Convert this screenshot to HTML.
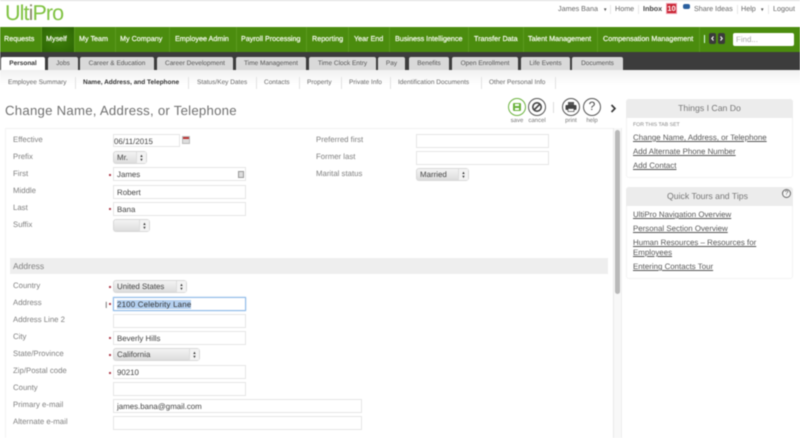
<!DOCTYPE html>
<html><head><meta charset="utf-8"><title>UltiPro</title>
<style>
html,body{margin:0;padding:0;background:#fff}
body{width:800px;height:438px;position:relative;overflow:hidden;font-family:"Liberation Sans",sans-serif;color:#666;text-rendering:geometricPrecision}
#w{position:absolute;left:0;top:0;width:800px;height:438px;filter:blur(.4px);overflow:hidden}
#w div,#w span.a,#w a{position:absolute;white-space:nowrap}
.n{top:34px;font-size:7.2px;line-height:10px;color:#f6faf0;-webkit-text-stroke:.22px #f6faf0}
.s{top:27px;width:1px;height:25px;background:#5c9a20}
.t{top:57px;height:13px;background:#d9d9d9;border-radius:2px 2px 0 0;font-size:6.5px;line-height:14px;text-align:center;color:#555}
.u{top:78px;font-size:6.5px;line-height:10px;color:#666}
.v{top:77px;width:1px;height:12px;background:#e2e2e2}
.l{left:13px;font-size:7.8px;line-height:10px;color:#808080}
.i{background:#fff;border:1px solid #e6e6e6;box-sizing:border-box;height:14px;font-size:7.9px;line-height:13px;padding-left:3px;color:#444}
.sel{background:linear-gradient(#f4f4f4,#dcdcdc);border:1px solid #d8d8d8;border-radius:3px;box-sizing:border-box;height:13px;font-size:7.9px;line-height:12px;padding-left:3px;color:#444}
.sel b{position:absolute;right:0;top:0;bottom:0;width:10px;background:#f3f3f3;border-left:1px solid #ddd;color:#333;font-size:4px;line-height:4.2px;text-align:center;font-weight:normal;padding-top:1.5px;box-sizing:border-box}
.r{left:109px;width:2px;height:2px;background:#b04050}
.lk{left:633px;font-size:7.9px;line-height:10px;color:#555;text-decoration:underline}
.ic{top:98px;width:18px;height:18px;border:1.3px solid #555;border-radius:50%;box-sizing:border-box;background:#fff}
.ict{top:117px;font-size:6px;line-height:8px;color:#777;text-align:center;width:24px}
.top{top:4px;font-size:7.2px;line-height:10px;color:#666}
.sp{top:5px;width:1px;height:9px;background:#e8e8e8}
</style></head><body><div id="w">

<div style="left:0;top:0;width:800px;height:1px;background:#ddd"></div>
<div style="left:5px;top:0;font-size:21.5px;line-height:27px;color:#7fc241;letter-spacing:-.9px">Ult<span style="color:#8b8b6a">i</span>Pro</div>

<div class="top" style="left:558px">James Bana</div>
<div style="left:603px;top:5px;font-size:4.5px;line-height:9px;color:#555">▼</div>
<div class="sp" style="left:610px"></div>
<div class="top" style="left:615px">Home</div>
<div class="sp" style="left:638px"></div>
<div class="top" style="left:643px;color:#444;font-weight:bold">Inbox</div>
<div style="left:666px;top:3px;width:11px;height:11px;background:#c8202f;border:1px solid #e9a;box-sizing:border-box;color:#fff;font-size:7.5px;line-height:9px;font-weight:bold;text-align:center">10</div>
<div style="left:683px;top:4px;width:7px;height:5px;background:#2a5f9e;border-radius:2px"></div>
<div class="top" style="left:694px">Share Ideas</div>
<div class="sp" style="left:737px"></div>
<div class="top" style="left:741px">Help</div>
<div style="left:760px;top:5px;font-size:4.5px;line-height:9px;color:#555">▼</div>
<div class="sp" style="left:768px"></div>
<div class="top" style="left:773px">Logout</div>

<div style="left:0;top:27px;width:800px;height:25px;background:#4b8c0e"></div>
<div style="left:0;top:52px;width:800px;height:18px;background:#3c3c3c"></div>
<div style="left:41px;top:27px;width:33px;height:25px;background:radial-gradient(#3f7f0c,#2c6504)"></div>

<div class="s" style="left:41px"></div><div class="s" style="left:74px"></div><div class="s" style="left:115px"></div><div class="s" style="left:169px"></div><div class="s" style="left:236px"></div><div class="s" style="left:306px"></div><div class="s" style="left:348px"></div><div class="s" style="left:389px"></div><div class="s" style="left:468px"></div><div class="s" style="left:523px"></div><div class="s" style="left:597px"></div><div class="s" style="left:699px"></div>

<div class="n" style="left:4px">Requests</div>
<div class="n" style="left:46px">Myself</div>
<div class="n" style="left:79px">My Team</div>
<div class="n" style="left:120px">My Company</div>
<div class="n" style="left:175px">Employee Admin</div>
<div class="n" style="left:241px">Payroll Processing</div>
<div class="n" style="left:312px">Reporting</div>
<div class="n" style="left:354px">Year End</div>
<div class="n" style="left:395px">Business Intelligence</div>
<div class="n" style="left:474px">Transfer Data</div>
<div class="n" style="left:528px">Talent Management</div>
<div class="n" style="left:603px">Compensation Management</div>
<div style="left:704px;top:35px;width:1px;height:8px;background:#dfe"></div>
<div style="left:709px;top:33px;width:7px;height:11px;background:#3a3a3a;border-radius:2px"></div>
<div style="left:718px;top:33px;width:7px;height:11px;background:#3a3a3a;border-radius:2px"></div>
<svg style="position:absolute;left:709px;top:33px" width="16" height="11"><path d="M4.5 3.5L2.8 5.5L4.5 7.5" fill="none" stroke="#fff" stroke-width="1.1"/><path d="M11.5 3.5L13.2 5.5L11.5 7.5" fill="none" stroke="#fff" stroke-width="1.1"/></svg>
<div style="left:733px;top:33px;width:61px;height:13px;background:#fff;border-radius:2px;font-size:7.9px;line-height:14px;padding-left:3px;box-sizing:border-box;color:#aaa">Find...</div>

<div class="t" style="left:1px;width:44px;height:14px;background:#fff;color:#333;font-weight:bold">Personal</div>
<div class="t" style="left:48px;width:30px">Jobs</div>
<div class="t" style="left:80px;width:74px">Career &amp; Education</div>
<div class="t" style="left:157px;width:76px">Career Development</div>
<div class="t" style="left:236px;width:70px">Time Management</div>
<div class="t" style="left:309px;width:67px">Time Clock Entry</div>
<div class="t" style="left:378px;width:27px">Pay</div>
<div class="t" style="left:409px;width:40px">Benefits</div>
<div class="t" style="left:452px;width:66px">Open Enrollment</div>
<div class="t" style="left:521px;width:49px">Life Events</div>
<div class="t" style="left:572px;width:51px">Documents</div>

<div style="left:0;top:70px;width:800px;height:15px;background:linear-gradient(#f1f1f1,#fff)"></div>
<div class="u" style="left:8px">Employee Summary</div><div class="v" style="left:75px"></div>
<div class="u" style="left:83px;color:#333;font-weight:bold">Name, Address, and Telephone</div><div class="v" style="left:188px"></div>
<div class="u" style="left:197px">Status/Key Dates</div><div class="v" style="left:256px"></div>
<div class="u" style="left:264px">Contacts</div><div class="v" style="left:299px"></div>
<div class="u" style="left:307px">Property</div><div class="v" style="left:341px"></div>
<div class="u" style="left:349px">Private Info</div><div class="v" style="left:390px"></div>
<div class="u" style="left:398px">Identification Documents</div><div class="v" style="left:481px"></div>
<div class="u" style="left:489px">Other Personal Info</div><div class="v" style="left:555px"></div>

<div style="left:5px;top:102px;font-size:13.2px;line-height:18px;color:#707070;letter-spacing:.25px">Change Name, Address, or Telephone</div>

<div class="ic" style="left:508px;border-color:#6cb33f;border-width:1.5px"></div>
<div style="left:513px;top:103px;width:8px;height:8px;background:#6cb33f;border-radius:1px"></div>
<div style="left:515px;top:104px;width:4px;height:2px;background:#fff"></div>
<div style="left:515px;top:108px;width:4px;height:2px;background:#fff"></div>
<div class="ic" style="left:528px"></div>
<svg style="position:absolute;left:528px;top:98px" width="18" height="18"><circle cx="9" cy="9" r="4.2" fill="none" stroke="#444" stroke-width="1.6"/><path d="M6 12L12 6" stroke="#444" stroke-width="1.6"/></svg>
<div style="left:553px;top:102px;width:1px;height:11px;background:#ddd"></div>
<div class="ic" style="left:562px"></div>
<svg style="position:absolute;left:562px;top:98px" width="18" height="18"><path d="M6 4h6v3.5H6z" fill="#555"/><rect x="3.5" y="7" width="11" height="5" rx="1" fill="#444"/><rect x="6" y="10.5" width="6" height="3" fill="#fff" stroke="#444" stroke-width=".7"/></svg>
<div class="ic" style="left:583px;color:#444;font-size:12px;line-height:15px;text-align:center">?</div>
<svg style="position:absolute;left:610px;top:104px" width="7" height="9"><path d="M1.5 1L5 4.5L1.5 8" fill="none" stroke="#333" stroke-width="1.6"/></svg>
<div class="ict" style="left:505px">save</div>
<div class="ict" style="left:525px">cancel</div>
<div class="ict" style="left:559px">print</div>
<div class="ict" style="left:580px">help</div>

<div style="left:5px;top:128px;width:617px;height:310px;border-top:1px solid #f2f2f2;border-left:1px solid #f4f4f4;box-sizing:border-box"></div>
<div style="left:613px;top:128px;width:9px;height:310px;background:#f8f8f8;border-left:1px solid #eaeaea;border-right:1px solid #eee;box-sizing:border-box"></div>
<div style="left:615px;top:130px;width:5px;height:164px;background:#b9b9b9;border-radius:3px"></div>

<div class="l" style="top:135px">Effective</div>
<div class="i" style="left:113px;top:134px;width:67px;height:13px;padding-left:0">06/11/2015</div>
<div style="left:182px;top:136px;width:8px;height:8px;background:linear-gradient(#b33 30%,#ddd 30%);border:1px solid #bbb;box-sizing:border-box"></div>
<div class="l" style="top:152px">Prefix</div>
<div class="sel" style="left:113px;top:151px;width:34px">Mr.<b>▲<br>▼</b></div>
<div class="l" style="top:169px">First</div><div class="r" style="top:174px"></div>
<div class="i" style="left:113px;top:167px;width:133px">James</div>
<div style="left:238px;top:171px;width:6px;height:7px;border:1px solid #999;box-sizing:border-box;background:#ddd"></div>
<div class="l" style="top:186px">Middle</div>
<div class="i" style="left:113px;top:185px;width:133px">Robert</div>
<div class="l" style="top:203px">Last</div><div class="r" style="top:208px"></div>
<div class="i" style="left:113px;top:202px;width:133px">Bana</div>
<div class="l" style="top:220px">Suffix</div>
<div class="sel" style="left:113px;top:219px;width:37px"><b>▲<br>▼</b></div>

<div style="left:10px;top:258px;width:598px;height:16px;background:#eee;font-size:8.5px;line-height:16px;color:#808080;padding-left:3px;box-sizing:border-box">Address</div>

<div class="l" style="top:281px">Country</div><div class="r" style="top:286px"></div>
<div class="sel" style="left:113px;top:280px;width:74px">United States<b>▲<br>▼</b></div>
<div class="l" style="top:298px">Address</div><div class="r" style="top:303px"></div>
<div style="left:105px;top:301px;font-size:9px;line-height:9px;color:#666">I</div>
<div class="i" style="left:113px;top:297px;width:133px;border-color:#8fbbe8;box-shadow:0 0 1px #8fbbe8"><span style="background:#b4d0f0;color:#333;letter-spacing:.2px">2100 Celebrity Lane</span></div>
<div class="l" style="top:315px">Address Line 2</div>
<div class="i" style="left:113px;top:314px;width:133px"></div>
<div class="l" style="top:332px">City</div><div class="r" style="top:337px"></div>
<div class="i" style="left:113px;top:331px;width:133px">Beverly Hills</div>
<div class="l" style="top:349px">State/Province</div><div class="r" style="top:354px"></div>
<div class="sel" style="left:113px;top:348px;width:87px">California<b>▲<br>▼</b></div>
<div class="l" style="top:366px">Zip/Postal code</div><div class="r" style="top:372px"></div>
<div class="i" style="left:113px;top:365px;width:133px">90210</div>
<div class="l" style="top:383px">County</div>
<div class="i" style="left:113px;top:382px;width:133px"></div>
<div class="l" style="top:400px">Primary e-mail</div>
<div class="i" style="left:113px;top:399px;width:249px">james.bana@gmail.com</div>
<div class="l" style="top:417px">Alternate e-mail</div>
<div class="i" style="left:113px;top:416px;width:249px"></div>

<div class="l" style="left:316px;top:135px">Preferred first</div>
<div class="i" style="left:416px;top:134px;width:133px"></div>
<div class="l" style="left:316px;top:152px">Former last</div>
<div class="i" style="left:416px;top:151px;width:133px"></div>
<div class="l" style="left:316px;top:169px">Marital status</div>
<div class="sel" style="left:416px;top:168px;width:53px">Married<b>▲<br>▼</b></div>

<div style="left:626px;top:99px;width:167px;height:79px;border:1px solid #f3f3f3;border-radius:3px;box-sizing:border-box"></div>
<div style="left:626px;top:99px;width:167px;height:19px;background:#ececec;border-radius:3px 3px 0 0;font-size:8.7px;line-height:19px;text-align:center;color:#777">Things I Can Do</div>
<div style="left:633px;top:122px;font-size:5.2px;line-height:7px;color:#888">FOR THIS TAB SET</div>
<a class="lk" style="top:133px">Change Name, Address, or Telephone</a>
<a class="lk" style="top:147px">Add Alternate Phone Number</a>
<a class="lk" style="top:161px">Add Contact</a>

<div style="left:626px;top:187px;width:167px;height:92px;border:1px solid #f3f3f3;border-radius:3px;box-sizing:border-box"></div>
<div style="left:626px;top:187px;width:167px;height:19px;background:#ececec;border-radius:3px 3px 0 0;font-size:8.7px;line-height:19px;text-align:center;color:#777;text-indent:-4px">Quick Tours and Tips</div>
<div style="left:782px;top:189px;width:9px;height:9px;border:1px solid #666;border-radius:50%;box-sizing:border-box;font-size:6.5px;line-height:7px;text-align:center;color:#444;background:#f6f6f6">?</div>
<a class="lk" style="top:210px">UltiPro Navigation Overview</a>
<a class="lk" style="top:224px">Personal Section Overview</a>
<a class="lk" style="top:238px">Human Resources – Resources for</a>
<a class="lk" style="top:248px">Employees</a>
<a class="lk" style="top:262px">Entering Contacts Tour</a>

</div></body></html>
